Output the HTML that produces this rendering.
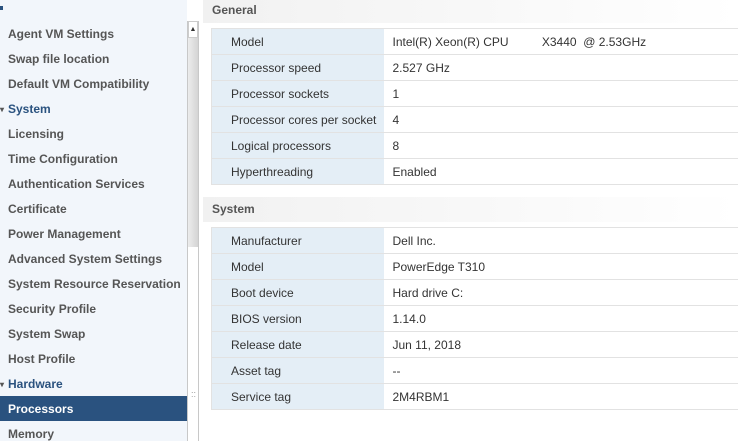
<!DOCTYPE html>
<html><head><meta charset="utf-8"><style>
*{margin:0;padding:0;box-sizing:border-box}
body{width:738px;height:441px;overflow:hidden;background:#fff;font-family:"Liberation Sans",Arial,sans-serif;position:relative}
#left{position:absolute;left:0;top:0;width:187px;height:441px;background:#f2f6fb}
.it{position:absolute;left:0;width:187px;height:25px;line-height:27px;padding-left:8px;font-size:12px;font-weight:bold;color:#555}
.hd{color:#2a527f}
.sel{background:#2a527f;color:#fff}
.arr{position:absolute;left:0;font-size:8px;color:#555}
#sb{position:absolute;left:187px;top:21px;width:12px;height:420px;border-left:1px solid #c8c8c8;border-right:1px solid #c8c8c8;background:#fff}
#thumb{position:absolute;left:0;top:17px;width:10px;height:209px;background:linear-gradient(90deg,#ececec,#d4d4d4)}
#up{position:absolute;left:0;top:0;width:10px;height:17px;border:1px solid #ccc;background:#fff;font-size:7px;text-align:center;line-height:15px;color:#333}
.sec{position:absolute;left:203px;width:535px;height:23px;background:linear-gradient(90deg,#f1f1f1,#fff);font-size:12px;font-weight:bold;color:#555;padding-left:9px;line-height:20px}
table{position:absolute;left:211px;width:527px;border-collapse:collapse;font-size:12px;color:#333}
td{height:26px;border-top:1px solid #e2e2e2;border-bottom:1px solid #e2e2e2;padding-left:19px}
td.l{width:172px;background:#e4eef6;border-left:1px solid #e2e2e2}
td.v{padding-left:9px}
</style></head><body>
<div id="left">
<div style="position:absolute;left:0;top:6px;width:3px;height:4px;background:#2a527f"></div>
<div class="it" style="top:21px">Agent VM Settings</div>
<div class="it" style="top:46px">Swap file location</div>
<div class="it" style="top:71px">Default VM Compatibility</div>
<div class="it hd" style="top:96px"><span class="arr">&#9662;</span>System</div>
<div class="it" style="top:121px">Licensing</div>
<div class="it" style="top:146px">Time Configuration</div>
<div class="it" style="top:171px">Authentication Services</div>
<div class="it" style="top:196px">Certificate</div>
<div class="it" style="top:221px">Power Management</div>
<div class="it" style="top:246px">Advanced System Settings</div>
<div class="it" style="top:271px">System Resource Reservation</div>
<div class="it" style="top:296px">Security Profile</div>
<div class="it" style="top:321px">System Swap</div>
<div class="it" style="top:346px">Host Profile</div>
<div class="it hd" style="top:371px"><span class="arr">&#9662;</span>Hardware</div>
<div class="it sel" style="top:396px">Processors</div>
<div class="it" style="top:421px">Memory</div>
</div>
<div id="sb"><div id="up">&#9650;</div><div id="thumb"></div></div>
<div style="position:absolute;left:191px;top:391px;font-size:9px;color:#999;line-height:6px">::</div>
<div class="sec" style="top:0">General</div>
<table style="top:28px">
<tr><td class="l">Model</td><td class="v">Intel(R) Xeon(R) CPU &nbsp; &nbsp; &nbsp; &nbsp; &nbsp;X3440 &nbsp;@ 2.53GHz</td></tr>
<tr><td class="l">Processor speed</td><td class="v">2.527 GHz</td></tr>
<tr><td class="l">Processor sockets</td><td class="v">1</td></tr>
<tr><td class="l">Processor cores per socket</td><td class="v">4</td></tr>
<tr><td class="l">Logical processors</td><td class="v">8</td></tr>
<tr><td class="l">Hyperthreading</td><td class="v">Enabled</td></tr>
</table>
<div class="sec" style="top:197px;height:25px;line-height:24px">System</div>
<table style="top:227px">
<tr><td class="l">Manufacturer</td><td class="v">Dell Inc.</td></tr>
<tr><td class="l">Model</td><td class="v">PowerEdge T310</td></tr>
<tr><td class="l">Boot device</td><td class="v">Hard drive C:</td></tr>
<tr><td class="l">BIOS version</td><td class="v">1.14.0</td></tr>
<tr><td class="l">Release date</td><td class="v">Jun 11, 2018</td></tr>
<tr><td class="l">Asset tag</td><td class="v">--</td></tr>
<tr><td class="l">Service tag</td><td class="v">2M4RBM1</td></tr>
</table>
</body></html>
